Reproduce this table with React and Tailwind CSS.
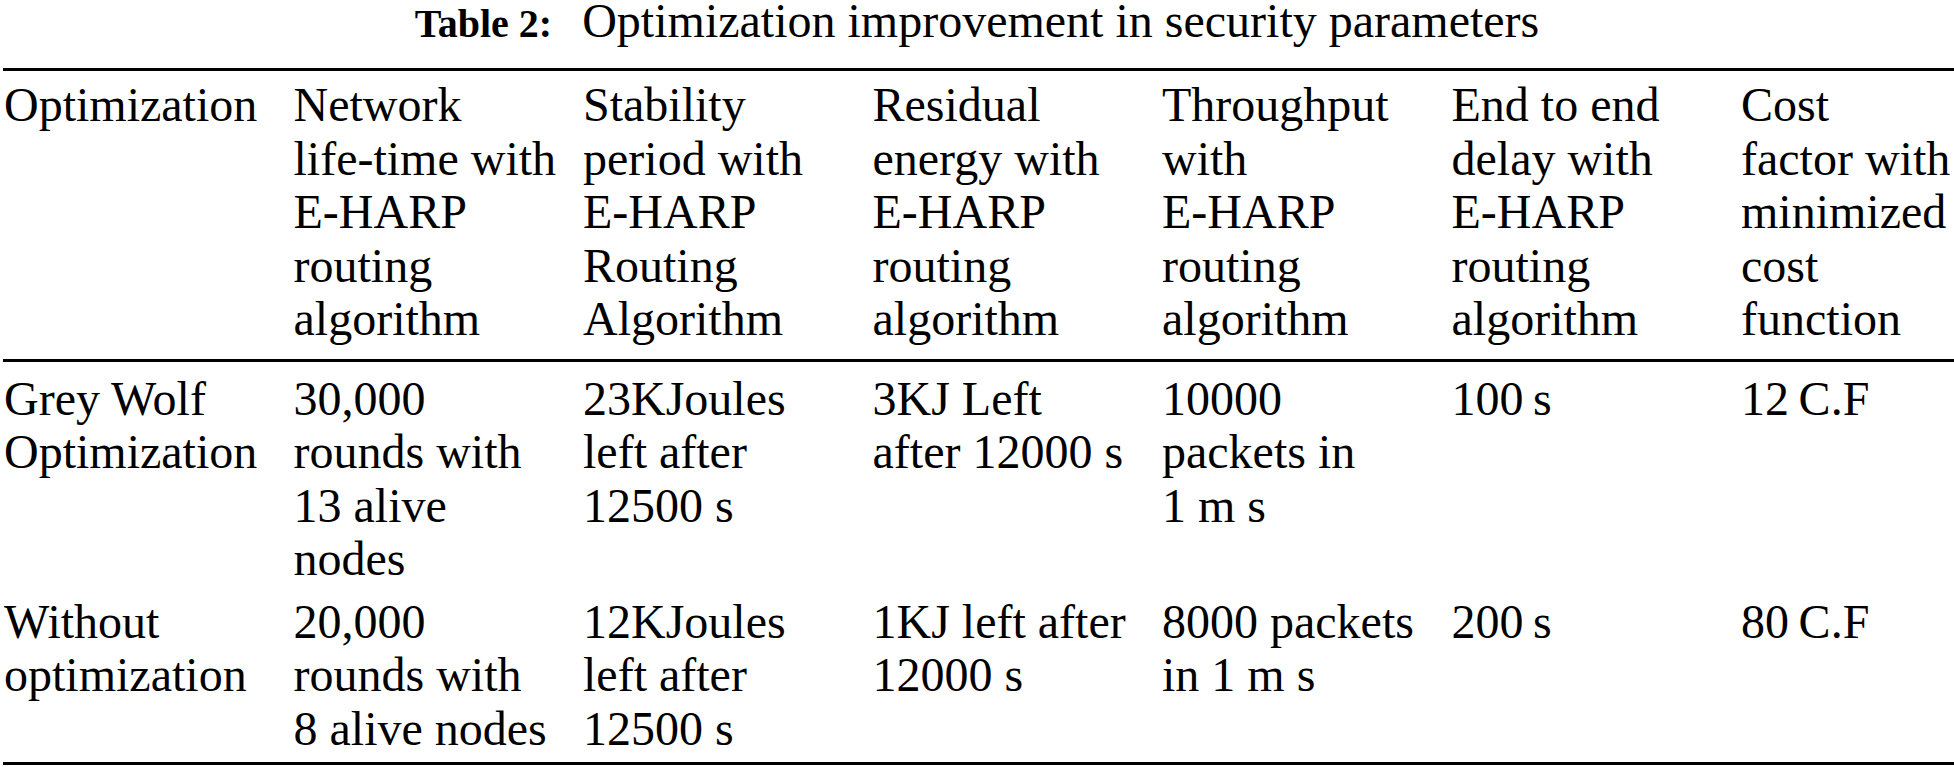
import React from 'react';

const header = [
    ['Optimization'],
    ['Network', 'life-time with', 'E-HARP', 'routing', 'algorithm'],
    ['Stability', 'period with', 'E-HARP', 'Routing', 'Algorithm'],
    ['Residual', 'energy with', 'E-HARP', 'routing', 'algorithm'],
    ['Throughput', 'with', 'E-HARP', 'routing', 'algorithm'],
    ['End to end', 'delay with', 'E-HARP', 'routing', 'algorithm'],
    ['Cost', 'factor with', 'minimized', 'cost', 'function'],
];

const rows = [
    [
        ['Grey Wolf', 'Optimization'],
        ['30,000', 'rounds with', '13 alive', 'nodes'],
        ['23KJoules', 'left after', '12500 s'],
        ['3KJ Left', 'after 12000 s'],
        ['10000', 'packets in', '1 m s'],
        ['100\u2009s'],
        ['12\u2009C.F'],
    ],
    [
        ['Without', 'optimization'],
        ['20,000', 'rounds with', '8 alive nodes'],
        ['12KJoules', 'left after', '12500 s'],
        ['1KJ left after', '12000 s'],
        ['8000 packets', 'in 1 m s'],
        ['200\u2009s'],
        ['80\u2009C.F'],
    ],
];

const Cell = ({ lines }) => (
    <div className="flex flex-col">
        {lines.map((line, i) => (
            <span key={i} className="block whitespace-nowrap">{line}</span>
        ))}
    </div>
);

const Row = ({ cells, className }) => (
    <div className={`grid grid-cols-[repeat(6,289.5px)_1fr] pl-[4px] ${className}`}>
        {cells.map((lines, i) => <Cell key={i} lines={lines} />)}
    </div>
);

export default function App() {
    return (
        <div className="w-[1954px] h-[767px] bg-white text-black overflow-hidden [font-family:'Liberation_Serif','Times_New_Roman',serif]">
            <div className="text-center text-[48px] leading-[42px] whitespace-nowrap">
                <span className="font-bold text-[40px]">Table 2:</span>
                <span className="ml-[30px]">Optimization improvement in security parameters</span>
            </div>

            <div className="ml-[3px] mt-[23px] h-[3px] bg-black" />

            <div className="text-[48px] leading-[53.5px]">
                <Row cells={header} className="pt-[7px] pb-[13px]" />
                <div className="ml-[3px] h-[3px] bg-black" />
                <Row cells={rows[0]} className="pt-[10px]" />
                <Row cells={rows[1]} className="pt-[9px] pb-[7px]" />
                <div className="ml-[3px] h-[3px] bg-black" />
            </div>
        </div>
    );
}
